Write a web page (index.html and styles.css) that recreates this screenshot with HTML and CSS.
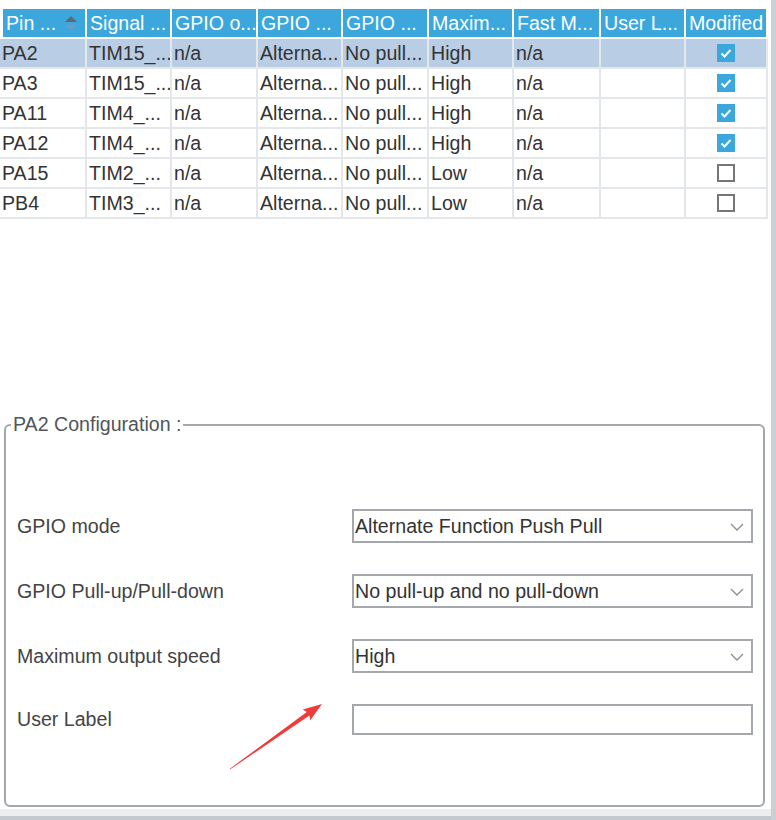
FILE: index.html
```html
<!DOCTYPE html>
<html lang="en">
<head>
  <meta charset="UTF-8">
  <title>Pin Configuration</title>
  <link rel="stylesheet" href="styles.css">
</head>
<body>
  <div class="window">
    <div class="panel">
      <div class="pin-table">
        <div class="row head">
          <div class="cell sortable">Pin ...
            <svg class="sort" width="12" height="15" viewBox="0 0 12 15">
              <polygon points="6,0 12,6 0,6" fill="#5d6a73"/>
              <polygon points="0,8.5 12,8.5 6,14.5" fill="#6a9ec4"/>
            </svg>
          </div>
          <div class="cell">Signal ...</div>
          <div class="cell">GPIO o...</div>
          <div class="cell">GPIO ...</div>
          <div class="cell">GPIO ...</div>
          <div class="cell">Maxim...</div>
          <div class="cell">Fast M...</div>
          <div class="cell">User L...</div>
          <div class="cell">Modified</div>
        </div>
        <div class="row selected">
          <div class="cell">PA2</div>
          <div class="cell">TIM15_...</div>
          <div class="cell">n/a</div>
          <div class="cell">Alterna...</div>
          <div class="cell">No pull...</div>
          <div class="cell">High</div>
          <div class="cell">n/a</div>
          <div class="cell"></div>
          <div class="cell center"><span class="check on"><svg width="18" height="18" viewBox="0 0 18 18"><path d="M4.5 9.5l3 3L13.5 6" fill="none" stroke="#fff" stroke-width="2"/></svg></span></div>
        </div>
        <div class="row">
          <div class="cell">PA3</div>
          <div class="cell">TIM15_...</div>
          <div class="cell">n/a</div>
          <div class="cell">Alterna...</div>
          <div class="cell">No pull...</div>
          <div class="cell">High</div>
          <div class="cell">n/a</div>
          <div class="cell"></div>
          <div class="cell center"><span class="check on"><svg width="18" height="18" viewBox="0 0 18 18"><path d="M4.5 9.5l3 3L13.5 6" fill="none" stroke="#fff" stroke-width="2"/></svg></span></div>
        </div>
        <div class="row">
          <div class="cell">PA11</div>
          <div class="cell">TIM4_...</div>
          <div class="cell">n/a</div>
          <div class="cell">Alterna...</div>
          <div class="cell">No pull...</div>
          <div class="cell">High</div>
          <div class="cell">n/a</div>
          <div class="cell"></div>
          <div class="cell center"><span class="check on"><svg width="18" height="18" viewBox="0 0 18 18"><path d="M4.5 9.5l3 3L13.5 6" fill="none" stroke="#fff" stroke-width="2"/></svg></span></div>
        </div>
        <div class="row">
          <div class="cell">PA12</div>
          <div class="cell">TIM4_...</div>
          <div class="cell">n/a</div>
          <div class="cell">Alterna...</div>
          <div class="cell">No pull...</div>
          <div class="cell">High</div>
          <div class="cell">n/a</div>
          <div class="cell"></div>
          <div class="cell center"><span class="check on"><svg width="18" height="18" viewBox="0 0 18 18"><path d="M4.5 9.5l3 3L13.5 6" fill="none" stroke="#fff" stroke-width="2"/></svg></span></div>
        </div>
        <div class="row">
          <div class="cell">PA15</div>
          <div class="cell">TIM2_...</div>
          <div class="cell">n/a</div>
          <div class="cell">Alterna...</div>
          <div class="cell">No pull...</div>
          <div class="cell">Low</div>
          <div class="cell">n/a</div>
          <div class="cell"></div>
          <div class="cell center"><span class="check"></span></div>
        </div>
        <div class="row">
          <div class="cell">PB4</div>
          <div class="cell">TIM3_...</div>
          <div class="cell">n/a</div>
          <div class="cell">Alterna...</div>
          <div class="cell">No pull...</div>
          <div class="cell">Low</div>
          <div class="cell">n/a</div>
          <div class="cell"></div>
          <div class="cell center"><span class="check"></span></div>
        </div>
      </div>

      <fieldset class="config">
        <legend>PA2 Configuration :</legend>
        <div class="form">
          <div class="label">GPIO mode</div>
          <div class="combo">
            <span>Alternate Function Push Pull</span>
            <svg class="chev" width="14" height="8" viewBox="0 0 14 8"><polyline points="1,1 7,7 13,1" fill="none" stroke="#8a8d90" stroke-width="1.3"/></svg>
          </div>

          <div class="label">GPIO Pull-up/Pull-down</div>
          <div class="combo">
            <span>No pull-up and no pull-down</span>
            <svg class="chev" width="14" height="8" viewBox="0 0 14 8"><polyline points="1,1 7,7 13,1" fill="none" stroke="#8a8d90" stroke-width="1.3"/></svg>
          </div>

          <div class="label">Maximum output speed</div>
          <div class="combo">
            <span>High</span>
            <svg class="chev" width="14" height="8" viewBox="0 0 14 8"><polyline points="1,1 7,7 13,1" fill="none" stroke="#8a8d90" stroke-width="1.3"/></svg>
          </div>

          <div class="label">User Label</div>
          <div class="text-field"></div>
        </div>
      </fieldset>

      <!-- annotation arrow -->
      <svg class="pointer" width="100" height="74" viewBox="0 0 100 74">
        <polygon points="3.8,68.7 80.8,12 76.7,9.6 96,4 84.2,20.3 83.4,15.6 4.2,69.3" fill="#f03b3b"/>
      </svg>
    </div>
    <div class="status"></div>
  </div>
</body>
</html>
```

FILE: styles.css
```css
body {
  margin: 0;
  font-family: "Liberation Sans", Arial, sans-serif;
  font-size: 19.6px;
  color: #333;
  background: #fff;
}

.window {
  width: 776px;
  height: 820px;
  box-sizing: border-box;
  border-right: 5px solid #cbd0d5;
  display: flex;
  flex-direction: column;
}

.panel {
  position: relative;
  flex: 1;
  display: flex;
  flex-direction: column;
}

/* Pin table */
.pin-table {
  flex: none;
  height: 413px;
  box-sizing: border-box;
  padding-top: 9px;
}

.row {
  display: grid;
  grid-template-columns: 87px 85px 86px 85px 86px 85px 87px 85px 82px;
}

.cell {
  height: 30px;
  box-sizing: border-box;
  border-right: 2px solid #e3e7ea;
  border-bottom: 2px solid #e3e7ea;
  padding-left: 2px;
  line-height: 29px;
  white-space: nowrap;
  overflow: hidden;
}

.head .cell {
  background: #3ba7dd;
  color: #fff;
  border-color: #fff;
  padding-left: 3px;
}
.head .cell:first-child {
  border-left: 3px solid #fff;
}

.sortable {
  display: flex;
  align-items: center;
}
.sort {
  margin-left: auto;
  margin-right: 8px;
}

.selected .cell {
  background: #b9cde5;
}

.center {
  display: flex;
  align-items: center;
  justify-content: center;
  padding-left: 0;
}

.check {
  display: block;
  width: 18px;
  height: 18px;
  box-sizing: border-box;
  border: 2px solid #767676;
  background: #fff;
}
.check.on {
  border: none;
  background: #3ba7dd;
}
.check svg {
  display: block;
}

/* Configuration box */
.config {
  flex: 1;
  min-width: 0;
  margin: 0 6px 2px 4px;
  padding: 73px 10px 0 11px;
  border: 2px solid #a3a8ac;
  border-radius: 6px;
}

.config legend {
  margin-left: -6px;
  padding: 0 2px;
  line-height: 23px;
  color: #50565c;
}

.form {
  display: grid;
  grid-template-columns: 335px 401px;
  grid-template-rows: 34px 34px 34px 30px;
  row-gap: 31px;
  align-items: center;
}

.label {
  color: #444;
  padding-top: 1px;
}

.combo {
  height: 34px;
  box-sizing: border-box;
  border: 2px solid #a4a8ac;
  padding: 1px 7px 0 1px;
  display: flex;
  align-items: center;
  justify-content: space-between;
}

.text-field {
  height: 31px;
  box-sizing: border-box;
  border: 2px solid #a4a8ac;
}

.pointer {
  position: absolute;
  left: 226px;
  top: 700px;
}

.status {
  flex: none;
  height: 11px;
  box-sizing: border-box;
  background: #eceef0;
  border-bottom: 4px solid #c3c9ce;
}
```
